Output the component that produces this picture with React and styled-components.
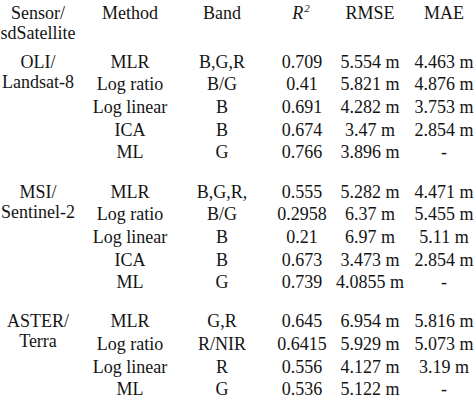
import React from "react";
import styled, { createGlobalStyle } from "styled-components";

const GlobalStyle = createGlobalStyle`
  html, body {
    margin: 0;
    padding: 0;
    background: #ffffff;
    overflow: hidden;
  }
`;

const COLS = "76px 108px 76px 84px 52px 96px";

const groups = [
  {
    sensor: ["OLI/", "Landsat-8"],
    rows: [
      ["MLR", "B,G,R", "0.709", "5.554 m", "4.463 m"],
      ["Log ratio", "B/G", "0.41", "5.821 m", "4.876 m"],
      ["Log linear", "B", "0.691", "4.282 m", "3.753 m"],
      ["ICA", "B", "0.674", "3.47 m", "2.854 m"],
      ["ML", "G", "0.766", "3.896 m", "-"],
    ],
  },
  {
    sensor: ["MSI/", "Sentinel-2"],
    rows: [
      ["MLR", "B,G,R,", "0.555", "5.282 m", "4.471 m"],
      ["Log ratio", "B/G", "0.2958", "6.37 m", "5.455 m"],
      ["Log linear", "B", "0.21", "6.97 m", "5.11 m"],
      ["ICA", "B", "0.673", "3.473 m", "2.854 m"],
      ["ML", "G", "0.739", "4.0855 m", "-"],
    ],
  },
  {
    sensor: ["ASTER/", "Terra"],
    rows: [
      ["MLR", "G,R", "0.645", "6.954 m", "5.816 m"],
      ["Log ratio", "R/NIR", "0.6415", "5.929 m", "5.073 m"],
      ["Log linear", "R", "0.556", "4.127 m", "3.19 m"],
      ["ML", "G", "0.536", "5.122 m", "-"],
    ],
  },
];

const Page = styled.div`
  width: 492px;
  padding-top: 3px;
  font-family: "Liberation Serif", "Times New Roman", Times, serif;
  font-size: 18px;
  color: #141414;
`;

const Header = styled.div`
  display: grid;
  grid-template-columns: ${COLS};
  line-height: 20px;
  margin-bottom: 7.7px;
`;

const Body = styled.div`
  display: flex;
  flex-direction: column;
  gap: 16.6px;
`;

const Group = styled.div`
  display: grid;
  grid-template-columns: ${COLS};
  grid-auto-rows: 22.67px;
  line-height: 22.67px;
`;

const Cell = styled.div`
  display: flex;
  justify-content: center;
  white-space: nowrap;
`;

const Stack = styled.div`
  display: flex;
  flex-direction: column;
  align-items: center;
  white-space: nowrap;
  line-height: 20px;
  padding-top: ${(p) => p.$offset || 0}px;
  grid-column: 1;
  grid-row: 1 / span ${(p) => p.$span || 1};
`;

const Italic = styled.span`
  font-style: italic;
  position: relative;
  left: -1px;

  sup {
    font-size: 11px;
    line-height: 0;
    vertical-align: 7px;
    margin-left: 1px;
  }
`;

export default function App() {
  return (
    <>
      <GlobalStyle />
      <Page>
        <Header>
          <Stack>
            <span>Sensor/</span>
            <span>sdSatellite</span>
          </Stack>
          <Cell>Method</Cell>
          <Cell>Band</Cell>
          <Cell>
            <Italic>
              R<sup>2</sup>
            </Italic>
          </Cell>
          <Cell>RMSE</Cell>
          <Cell>MAE</Cell>
        </Header>
        <Body>
          {groups.map((g) => (
            <Group key={g.sensor[0]}>
              <Stack $span={g.rows.length} $offset={1}>
                <span>{g.sensor[0]}</span>
                <span>{g.sensor[1]}</span>
              </Stack>
              {g.rows.map((r, i) =>
                r.map((v, j) => <Cell key={`${i}-${j}`}>{v}</Cell>)
              )}
            </Group>
          ))}
        </Body>
      </Page>
    </>
  );
}
